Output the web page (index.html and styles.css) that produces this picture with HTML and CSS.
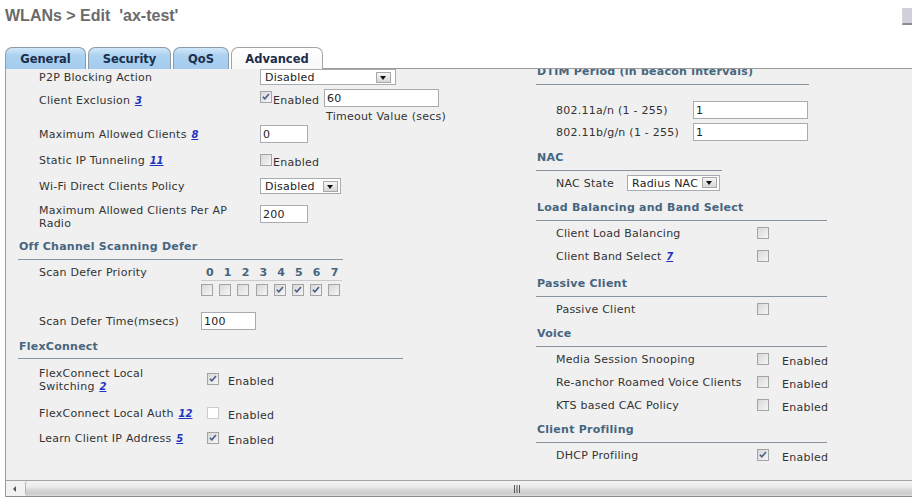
FILE: index.html
```html
<!DOCTYPE html>
<html>
<head>
<meta charset="utf-8">
<title>WLANs &gt; Edit</title>
<link rel="stylesheet" href="styles.css">
</head>
<body>
<div class="page">
  <header class="top">
    <h1 class="title">WLANs &gt; Edit&nbsp; 'ax-test'</h1>
    <div class="corner-btn"></div>
  </header>

  <nav class="tabs">
    <div class="tab t-general">General</div>
    <div class="tab t-security">Security</div>
    <div class="tab t-qos">QoS</div>
    <div class="tab t-adv active">Advanced</div>
    <div class="tab-fill"></div>
  </nav>

  <div class="panel">
    <div class="viewport">
      <!-- LEFT COLUMN -->
      <div class="col-left">
        <div class="row r-p2p">
          <div class="lbl w221">P2P Blocking Action</div>
          <div class="select s-p2p"><span class="sel-text">Disabled</span><span class="dd dd-wide"></span></div>
        </div>

        <div class="row r-excl">
          <div class="lbl w221 lbl-top">Client Exclusion <a class="help">3</a></div>
          <span class="cb on cb-top"><svg viewBox="0 0 12 12" width="10" height="10"><path d="M2.2 5.6 L4.6 8.2 L9.6 2.4" /></svg></span>
          <span class="en-inline">Enabled</span>
          <div class="stack">
            <input class="inp w114" type="text" value="60" readonly>
            <div class="hint">Timeout Value (secs)</div>
          </div>
        </div>

        <div class="row r-max">
          <div class="lbl w221">Maximum Allowed Clients <a class="help">8</a></div>
          <input class="inp w48" type="text" value="0" readonly>
        </div>

        <div class="row r-static">
          <div class="lbl w221">Static IP Tunneling <a class="help">11</a></div>
          <span class="cb"></span>
          <span class="en-low">Enabled</span>
        </div>

        <div class="row r-wifi">
          <div class="lbl w221">Wi-Fi Direct Clients Policy</div>
          <div class="select s-wifi"><span class="sel-text">Disabled</span><span class="dd"></span></div>
        </div>

        <div class="row r-radio">
          <div class="lbl w221 lbl-2l">Maximum Allowed Clients Per AP<br>Radio</div>
          <input class="inp w48 inp-top" type="text" value="200" readonly>
        </div>

        <h2 class="sec sec-l h-off">Off Channel Scanning Defer</h2>

        <div class="row r-prio">
          <div class="lbl w162 lbl-prio">Scan Defer Priority</div>
          <div class="prio">
            <div class="digits">
              <span>0</span><span>1</span><span>2</span><span>3</span><span>4</span><span>5</span><span>6</span><span>7</span>
            </div>
            <div class="prio-cbs">
              <span class="cell"><span class="cb"></span></span>
              <span class="cell"><span class="cb"></span></span>
              <span class="cell"><span class="cb"></span></span>
              <span class="cell"><span class="cb"></span></span>
              <span class="cell"><span class="cb on"><svg viewBox="0 0 12 12" width="10" height="10"><path d="M2.2 5.6 L4.6 8.2 L9.6 2.4" /></svg></span></span>
              <span class="cell"><span class="cb on"><svg viewBox="0 0 12 12" width="10" height="10"><path d="M2.2 5.6 L4.6 8.2 L9.6 2.4" /></svg></span></span>
              <span class="cell"><span class="cb on"><svg viewBox="0 0 12 12" width="10" height="10"><path d="M2.2 5.6 L4.6 8.2 L9.6 2.4" /></svg></span></span>
              <span class="cell"><span class="cb"></span></span>
            </div>
          </div>
        </div>

        <div class="row r-time">
          <div class="lbl w162">Scan Defer Time(msecs)</div>
          <input class="inp w55" type="text" value="100" readonly>
        </div>

        <h2 class="sec sec-l h-flex">FlexConnect</h2>

        <div class="row r-lsw">
          <div class="lbl w168 lbl-lsw">FlexConnect Local<br>Switching <a class="help">2</a></div>
          <span class="cb on cb-lsw"><svg viewBox="0 0 12 12" width="10" height="10"><path d="M2.2 5.6 L4.6 8.2 L9.6 2.4" /></svg></span>
          <span class="en-flex en-lsw">Enabled</span>
        </div>

        <div class="row r-lauth">
          <div class="lbl w168">FlexConnect Local Auth <a class="help">12</a></div>
          <span class="cb white"></span>
          <span class="en-flex">Enabled</span>
        </div>

        <div class="row r-learn">
          <div class="lbl w168">Learn Client IP Address <a class="help">5</a></div>
          <span class="cb on"><svg viewBox="0 0 12 12" width="10" height="10"><path d="M2.2 5.6 L4.6 8.2 L9.6 2.4" /></svg></span>
          <span class="en-flex">Enabled</span>
        </div>
      </div>

      <!-- RIGHT COLUMN -->
      <div class="col-right">
        <h2 class="sec h-dtim">DTIM Period (in beacon intervals)</h2>
        <div class="rrow rr-d1">
          <div class="lbl w137">802.11a/n (1 - 255)</div>
          <input class="inp w114" type="text" value="1" readonly>
        </div>
        <div class="rrow rr-d2">
          <div class="lbl w137">802.11b/g/n (1 - 255)</div>
          <input class="inp w114" type="text" value="1" readonly>
        </div>

        <h2 class="sec h-nac">NAC</h2>
        <div class="rrow">
          <div class="lbl w71">NAC State</div>
          <div class="select s-nac"><span class="sel-text">Radius NAC</span><span class="dd"></span></div>
        </div>

        <h2 class="sec h-wide h-lb">Load Balancing and Band Select</h2>
        <div class="rrow">
          <div class="lbl w201">Client Load Balancing</div>
          <span class="cb"></span>
        </div>
        <div class="rrow">
          <div class="lbl w201">Client Band Select <a class="help">7</a></div>
          <span class="cb"></span>
        </div>

        <h2 class="sec h-wide h-pass">Passive Client</h2>
        <div class="rrow">
          <div class="lbl w201">Passive Client</div>
          <span class="cb"></span>
        </div>

        <h2 class="sec h-wide h-std">Voice</h2>
        <div class="rrow">
          <div class="lbl w201">Media Session Snooping</div>
          <span class="cb"></span>
          <span class="en-r">Enabled</span>
        </div>
        <div class="rrow">
          <div class="lbl w201">Re-anchor Roamed Voice Clients</div>
          <span class="cb"></span>
          <span class="en-r">Enabled</span>
        </div>
        <div class="rrow">
          <div class="lbl w201">KTS based CAC Policy</div>
          <span class="cb"></span>
          <span class="en-r">Enabled</span>
        </div>

        <h2 class="sec h-wide h-std">Client Profiling</h2>
        <div class="rrow">
          <div class="lbl w201">DHCP Profiling</div>
          <span class="cb on"><svg viewBox="0 0 12 12" width="10" height="10"><path d="M2.2 5.6 L4.6 8.2 L9.6 2.4" /></svg></span>
          <span class="en-r">Enabled</span>
        </div>
      </div>
    </div>

    <div class="hscroll">
      <div class="hs-arrow"><span class="tri-left"></span></div>
      <div class="hs-thumb"><svg class="grip" width="8" height="8" viewBox="0 0 8 8"><path d="M1.5 0 V8 M4 0 V8 M6.5 0 V8" /></svg></div>
    </div>
  </div>
</div>
</body>
</html>
```

FILE: styles.css
```css
* { box-sizing: border-box; }

html, body {
  margin: 0;
  padding: 0;
  background: #ffffff;
}

body {
  width: 912px;
  height: 502px;
  overflow: hidden;
  font-family: "DejaVu Sans", Verdana, sans-serif;
  font-size: 11px;
  letter-spacing: 0.25px;
  color: #333333;
}

/* ---------- header ---------- */
.top {
  display: flex;
  justify-content: space-between;
  align-items: flex-start;
  height: 47px;
}

.title {
  margin: 0;
  padding: 6px 0 0 5px;
  font: bold 16px/20px "Liberation Sans", Arial, sans-serif;
  letter-spacing: 0;
  color: #6a6a6a;
  white-space: nowrap;
}

.corner-btn {
  margin-top: 8px;
  width: 10px;
  height: 17px;
  background: #d0d0dc;
  border-bottom: 2px solid #8c8c8c;
  border-left: 1px dotted #dcdcdc;
}

/* ---------- tabs ---------- */
.tabs {
  display: flex;
  align-items: flex-end;
  height: 22px;
  padding-left: 5px;
}

.tab {
  height: 22px;
  margin-right: 2px;
  border: 1px solid #8a9bab;
  border-bottom: 0;
  border-radius: 7px 7px 0 0;
  background: linear-gradient(#d2e8f9 0%, #acd2f0 35%, #a3ccee 100%);
  font-weight: bold;
  font-size: 11.5px;
  letter-spacing: 0;
  line-height: 22px;
  text-align: center;
  color: #1c2e4b;
}

.t-general { width: 81px; }
.t-security { width: 83px; }
.t-qos { width: 56px; }
.t-adv { width: 92px; margin-right: 0; }

.tab.active {
  background: linear-gradient(#ffffff, #f8f8f8);
  border-color: #a3a3a3;
}

.tab-fill {
  flex: 1;
  height: 22px;
  border-bottom: 1px solid #9b9b9b;
}

/* ---------- panel ---------- */
.panel {
  margin-left: 5px;
  border-left: 1px solid #9b9b9b;
}

.viewport {
  height: 411px;
  overflow: hidden;
  display: flex;
  background: #f0f0f0;
}

.col-left {
  width: 530px;
  flex: none;
}

.col-right {
  flex: 1;
  margin-top: -5px;
}

/* ---------- generic ---------- */
.lbl {
  flex: none;
  padding-top: 2px;
  line-height: 14px;
  color: #333333;
  white-space: nowrap;
}

.w221 { width: 221px; }
.w162 { width: 162px; }
.w168 { width: 168px; }
.w137 { width: 137px; }
.w71 { width: 71px; }
.w201 { width: 201px; }

.help {
  font-size: 10px;
  font-weight: bold;
  font-style: italic;
  letter-spacing: 0;
  color: #1f33c2;
  text-decoration: underline;
  margin-left: 1px;
}

.sec {
  margin: 0;
  padding: 1px 0 5px 1px;
  font-size: 11px;
  font-weight: bold;
  line-height: 14px;
  color: #46657f;
  border-bottom: 1px solid #8794a0;
  white-space: nowrap;
  overflow: hidden;
}

.inp {
  height: 18px;
  padding: 0 2px;
  margin: 0;
  border: 1px solid #a5acb2;
  background: #ffffff;
  font-family: "DejaVu Sans", Verdana, sans-serif;
  font-size: 11px;
  letter-spacing: 0.25px;
  color: #222222;
  outline: none;
  flex: none;
}

.w114 { width: 115px; }
.w48 { width: 48px; }
.w55 { width: 55px; }

.select {
  display: flex;
  align-items: center;
  height: 16px;
  border: 1px solid #a5acb2;
  background: #ffffff;
  flex: none;
}

.sel-text {
  flex: 1;
  padding: 2px 0 0 4px;
  color: #222222;
  line-height: 14px;
  white-space: nowrap;
}

.dd {
  position: relative;
  width: 15px;
  height: 11px;
  margin-right: 2px;
  border: 1px solid #a8a8a8;
  background: linear-gradient(#f6f6f6, #d6d6d6);
}

.dd::after {
  content: "";
  position: absolute;
  left: 3px;
  top: 3px;
  border-left: 3.5px solid transparent;
  border-right: 3.5px solid transparent;
  border-top: 4px solid #111111;
}

.dd-wide { margin-right: 4px; }

.s-p2p { width: 136px; }
.s-wifi { width: 81px; }
.s-nac { width: 93px; }

.cb {
  display: inline-flex;
  align-items: center;
  justify-content: center;
  width: 12px;
  height: 12px;
  flex: none;
  border: 1px solid #a4a4a4;
  background: linear-gradient(135deg, #d8d8d8, #f6f6f6);
}

.cb svg path {
  fill: none;
  stroke: #4a5c8c;
  stroke-width: 1.9;
}

.cb.white {
  background: #ffffff;
  border-color: #cdcdcd;
}

/* ---------- left rows ---------- */
.row {
  display: flex;
  align-items: center;
  padding-left: 33px;
}

.r-p2p { height: 16px; }

.r-excl {
  margin-top: 4px;
  height: 34px;
  align-items: flex-start;
}

.lbl-top {
  padding-top: 3px;
  line-height: 18px;
}

.cb-top { margin-top: 2px; }

.en-inline {
  width: 51px;
  margin-left: 1px;
  padding-top: 3px;
  line-height: 18px;
}

.stack {
  display: flex;
  flex-direction: column;
}

.hint {
  margin-top: 3px;
  padding-left: 2px;
  line-height: 14px;
  white-space: nowrap;
}

.r-max { margin-top: 2px; height: 18px; }

.r-static { margin-top: 8px; height: 18px; }

.en-low {
  margin-left: 1px;
  margin-top: 6px;
  line-height: 14px;
}

.r-wifi { margin-top: 9px; height: 16px; }

.r-radio {
  margin-top: 9px;
  height: 26px;
  align-items: flex-start;
}

.lbl-2l {
  padding-top: 1px;
  line-height: 13px;
}

.inp-top { margin-top: 2px; }

.sec-l { margin-left: 12px; }

.h-off { margin-top: 10px; width: 325px; }

.r-prio {
  margin-top: 5px;
  align-items: flex-start;
}

.lbl-prio { padding-top: 1px; }

.prio { width: 141px; }

.digits {
  display: grid;
  grid-template-columns: repeat(8, 17.8px);
}

.prio-cbs {
  display: grid;
  grid-template-columns: repeat(8, 18.2px);
  padding-top: 3px;
  border-top: 1px solid #cacaca;
}

.digits span {
  padding-top: 1px;
  line-height: 14px;
  font-weight: bold;
  letter-spacing: 0;
  color: #46657f;
  text-align: center;
}

.cell { display: flex; }

.r-time { margin-top: 16px; height: 18px; }

.h-flex { margin-top: 9px; width: 385px; padding-bottom: 4px; }

.r-lsw {
  margin-top: 6px;
  height: 26px;
  align-items: flex-start;
}

.lbl-lsw {
  padding-top: 2px;
  line-height: 13px;
}

.cb-lsw { margin-top: 8px; }

.r-lauth { margin-top: 13px; height: 18px; }
.r-learn { margin-top: 7px; height: 18px; }

.en-flex {
  margin-left: 9px;
  margin-top: 6px;
  line-height: 14px;
}

.en-lsw { margin-top: 10px; }

/* ---------- right rows ---------- */
.rrow {
  display: flex;
  align-items: center;
  height: 23px;
  padding-left: 20px;
}

.rr-d1 { margin-top: 14px; height: 22px; }
.rr-d2 { height: 22px; }

.h-dtim { width: 273px; }
.h-nac { margin-top: 7px; width: 186px; }
.h-wide { width: 291px; }
.h-lb { margin-top: 6px; }
.h-pass { margin-top: 9px; }
.h-std { margin-top: 6px; }

.en-r {
  margin-left: 13px;
  margin-top: 6px;
  line-height: 14px;
}

/* ---------- scrollbar ---------- */
.hscroll {
  display: flex;
  height: 17px;
  border-top: 1px solid #a2a2a2;
  border-bottom: 1px solid #8d8d8d;
  background: #f2f2f2;
}

.hs-arrow {
  width: 19px;
  display: flex;
  align-items: center;
  justify-content: center;
  flex: none;
}

.tri-left {
  width: 0;
  height: 0;
  border-top: 3px solid transparent;
  border-bottom: 3px solid transparent;
  border-right: 3px solid #555555;
  margin-left: -2px;
}

.hs-thumb {
  flex: 1;
  display: flex;
  align-items: center;
  padding-left: 487px;
  border-left: 1px solid #b4b4b4;
  border-radius: 3px 0 0 3px;
  background: linear-gradient(#f4f4f4 0%, #ebebeb 40%, #d7d7d7 58%, #cdcdcd 85%, #dcdcdc 100%);
}

.grip path {
  stroke: #555555;
  stroke-width: 1;
}
```
